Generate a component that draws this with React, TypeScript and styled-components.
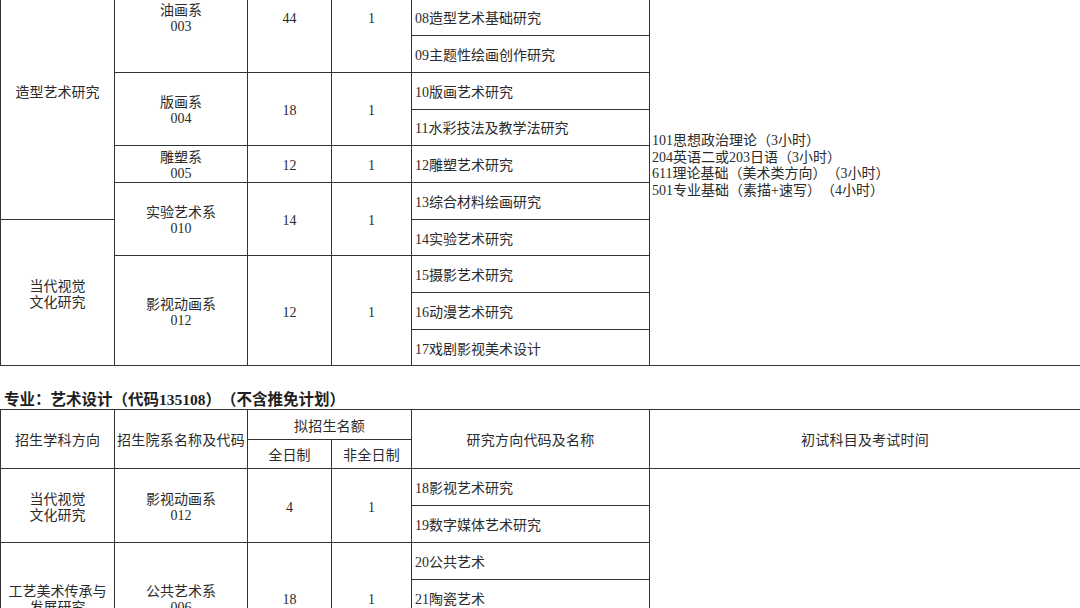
import React from "react";
import styled, { createGlobalStyle } from "styled-components";

const Global = createGlobalStyle`
  html, body {
    margin: 0;
    padding: 0;
    background: #ffffff;
    overflow: hidden;
  }
  body {
    font-family: "Liberation Serif", "Noto Sans CJK SC", serif;
    color: #2b2b2b;
    text-spacing-trim: space-all;
  }
`;

const Page = styled.div`
  width: 1080px;
  margin-top: -38px;
  display: flex;
  flex-direction: column;
`;

const Sheet = styled.table`
  width: 1080px;
  table-layout: fixed;
  border-collapse: collapse;
  font-size: 14px;
  line-height: 16px;
`;

const Row = styled.tr<{ $h: number }>`
  height: ${(p) => p.$h}px;
`;

const Cell = styled.td<{ $left?: boolean; $pad?: number }>`
  border: 1px solid #333;
  padding: 4px ${(p) => (p.$left ? 0 : 2)}px 0 ${(p) => (p.$pad ?? 2)}px;
  text-align: ${(p) => (p.$left ? "left" : "center")};
  vertical-align: middle;
  white-space: nowrap;
  overflow: hidden;
`;

const HeadCell = styled(Cell)`
  letter-spacing: 0.2px;
`;

const ExamLines = styled.div`
  line-height: 16.5px;
`;

const Title = styled.div`
  padding: 25px 0 0 4px;
  height: 18px;
  line-height: 18px;
  font-size: 15.5px;
  font-weight: 600;
  color: #1e1e1e;
  white-space: nowrap;
`;

const widths = [114, 133, 84, 80, 238, 431];

const Cols = () => (
  <colgroup>
    {widths.map((w, i) => (
      <col key={i} style={{ width: w }} />
    ))}
  </colgroup>
);

const Two = ({ a, b }: { a: string; b: string }) => (
  <>
    {a}
    <br />
    {b}
  </>
);

const R = 36.65;

const exam = [
  "101思想政治理论（3小时）",
  "204英语二或203日语（3小时）",
  "611理论基础（美术类方向）（3小时）",
  "501专业基础（素描+速写）（4小时）",
];

export default function App() {
  return (
    <>
      <Global />
      <Page>
        <Sheet>
          <Cols />
          <tbody>
            <Row $h={R}>
              <Cell rowSpan={7}>造型艺术研究</Cell>
              <Cell rowSpan={3}>
                <Two a="油画系" b="003" />
              </Cell>
              <Cell rowSpan={3}>44</Cell>
              <Cell rowSpan={3}>1</Cell>
              <Cell $left $pad={3}>07油画艺术研究</Cell>
              <Cell rowSpan={11} $left $pad={2}>
                <ExamLines>
                  {exam.map((t, i) => (
                    <React.Fragment key={i}>
                      {t}
                      {i < exam.length - 1 && <br />}
                    </React.Fragment>
                  ))}
                </ExamLines>
              </Cell>
            </Row>
            <Row $h={R}>
              <Cell $left $pad={3}>08造型艺术基础研究</Cell>
            </Row>
            <Row $h={R}>
              <Cell $left $pad={3}>09主题性绘画创作研究</Cell>
            </Row>
            <Row $h={R}>
              <Cell rowSpan={2}>
                <Two a="版画系" b="004" />
              </Cell>
              <Cell rowSpan={2}>18</Cell>
              <Cell rowSpan={2}>1</Cell>
              <Cell $left $pad={3}>10版画艺术研究</Cell>
            </Row>
            <Row $h={R}>
              <Cell $left $pad={3}>11水彩技法及教学法研究</Cell>
            </Row>
            <Row $h={R}>
              <Cell>
                <Two a="雕塑系" b="005" />
              </Cell>
              <Cell>12</Cell>
              <Cell>1</Cell>
              <Cell $left $pad={3}>12雕塑艺术研究</Cell>
            </Row>
            <Row $h={R}>
              <Cell rowSpan={2}>
                <Two a="实验艺术系" b="010" />
              </Cell>
              <Cell rowSpan={2}>14</Cell>
              <Cell rowSpan={2}>1</Cell>
              <Cell $left $pad={3}>13综合材料绘画研究</Cell>
            </Row>
            <Row $h={R}>
              <Cell rowSpan={4}>
                <Two a="当代视觉" b="文化研究" />
              </Cell>
              <Cell $left $pad={3}>14实验艺术研究</Cell>
            </Row>
            <Row $h={R}>
              <Cell rowSpan={3}>
                <Two a="影视动画系" b="012" />
              </Cell>
              <Cell rowSpan={3}>12</Cell>
              <Cell rowSpan={3}>1</Cell>
              <Cell $left $pad={3}>15摄影艺术研究</Cell>
            </Row>
            <Row $h={R}>
              <Cell $left $pad={3}>16动漫艺术研究</Cell>
            </Row>
            <Row $h={R}>
              <Cell $left $pad={3}>17戏剧影视美术设计</Cell>
            </Row>
          </tbody>
        </Sheet>

        <Title>专业：艺术设计（代码135108）（不含推免计划）</Title>

        <Sheet>
          <Cols />
          <tbody>
            <Row $h={30}>
              <HeadCell rowSpan={2}>招生学科方向</HeadCell>
              <HeadCell rowSpan={2}>招生院系名称及代码</HeadCell>
              <HeadCell colSpan={2}>拟招生名额</HeadCell>
              <HeadCell rowSpan={2}>研究方向代码及名称</HeadCell>
              <HeadCell rowSpan={2}>初试科目及考试时间</HeadCell>
            </Row>
            <Row $h={29}>
              <HeadCell>全日制</HeadCell>
              <HeadCell>非全日制</HeadCell>
            </Row>
            <Row $h={37}>
              <Cell rowSpan={2}>
                <Two a="当代视觉" b="文化研究" />
              </Cell>
              <Cell rowSpan={2}>
                <Two a="影视动画系" b="012" />
              </Cell>
              <Cell rowSpan={2}>4</Cell>
              <Cell rowSpan={2}>1</Cell>
              <Cell $left $pad={3}>18影视艺术研究</Cell>
              <Cell rowSpan={5} $left $pad={2} />
            </Row>
            <Row $h={37}>
              <Cell $left $pad={3}>19数字媒体艺术研究</Cell>
            </Row>
            <Row $h={37}>
              <Cell rowSpan={3}>
                <Two a="工艺美术传承与" b="发展研究" />
              </Cell>
              <Cell rowSpan={3}>
                <Two a="公共艺术系" b="006" />
              </Cell>
              <Cell rowSpan={3}>18</Cell>
              <Cell rowSpan={3}>1</Cell>
              <Cell $left $pad={3}>20公共艺术</Cell>
            </Row>
            <Row $h={37}>
              <Cell $left $pad={3}>21陶瓷艺术</Cell>
            </Row>
            <Row $h={37}>
              <Cell $left $pad={3} />
            </Row>
          </tbody>
        </Sheet>
      </Page>
    </>
  );
}
